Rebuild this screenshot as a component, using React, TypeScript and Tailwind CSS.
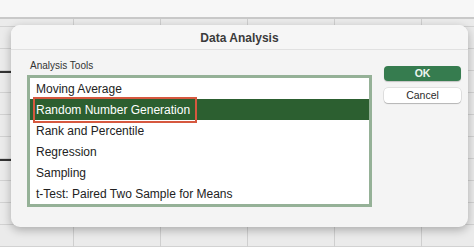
import React from "react";

const items = [
  "Moving Average",
  "Random Number Generation",
  "Rank and Percentile",
  "Regression",
  "Sampling",
  "t-Test: Paired Two Sample for Means",
];

export default function App() {
  return (
    <div
      className="relative w-[474px] h-[247px] overflow-hidden flex flex-col bg-[#ededed]"
      style={{ fontFamily: '"Liberation Sans", Arial, sans-serif' }}
    >
      <div className="h-[17px] bg-[#f7f7f7] shrink-0" />
      <div className="h-[2px] bg-[#c9c9c9] shrink-0" />
      <div className="flex-1 bg-[#ebebeb] bg-[linear-gradient(to_right,#cfcfcf_1px,transparent_1px),linear-gradient(to_bottom,#d2d2d2_1px,transparent_1px)] bg-[length:87px_22px] bg-[position:73px_7px]" />
      <div className="absolute left-0 top-[71px] w-[11px] h-[2px] bg-[#333]" />
      <div className="absolute left-0 top-[159px] w-[11px] h-[2px] bg-[#333]" />

      {/* Dialog */}
      <div className="absolute left-[11px] top-[25px] w-[457px] h-[202px] rounded-[9px] bg-[#f4f4f4] shadow-[0_3px_10px_rgba(0,0,0,0.28)] flex flex-col">
        <div className="h-[25px] shrink-0 rounded-t-[9px] bg-[#f6f6f6] border-b border-[#e1e1e1] flex items-center justify-center">
          <span className="text-[12px] font-bold text-[#3b3b3b] pt-[1px]">Data Analysis</span>
        </div>
        <div className="flex pl-[16px] pr-[7px]">
          <div className="w-[345px] shrink-0 flex flex-col pt-[9px]">
            <div className="ml-[3px] h-[14px] leading-[14px] text-[10px] text-[#333]">Analysis Tools</div>
            <div className="relative mt-[2px] border-[3px] border-[#95b197] bg-white h-[132px] flex flex-col">
              {items.map((t, i) => (
                <div
                  key={t}
                  className={
                    i === 1
                      ? "h-[21px] shrink-0 flex items-center pl-[6px] text-[12px] bg-[#2c5f30] text-white"
                      : "h-[21px] shrink-0 flex items-center pl-[6px] text-[12px] text-[#222]"
                  }
                >
                  {t}
                </div>
              ))}
              <div className="absolute left-[3px] top-[19px] w-[164px] h-[26px] border-[2px] border-[#d6583f]" />
            </div>
          </div>
          <div className="ml-[12px] w-[77px] shrink-0 flex flex-col gap-[7px] pt-[16px]">
            <div className="h-[15px] rounded-[4px] bg-[#367c4f] shadow-[0_1px_1px_rgba(0,0,0,0.2)] flex items-center justify-center text-[10.5px] font-bold text-[#eef5ef]">
              OK
            </div>
            <div className="h-[15px] rounded-[4px] bg-white shadow-[0_0_0_0.5px_rgba(0,0,0,0.15),0_1px_1px_rgba(0,0,0,0.2)] flex items-center justify-center text-[10.5px] text-[#2a2a2a]">
              Cancel
            </div>
          </div>
        </div>
      </div>
    </div>
  );
}
